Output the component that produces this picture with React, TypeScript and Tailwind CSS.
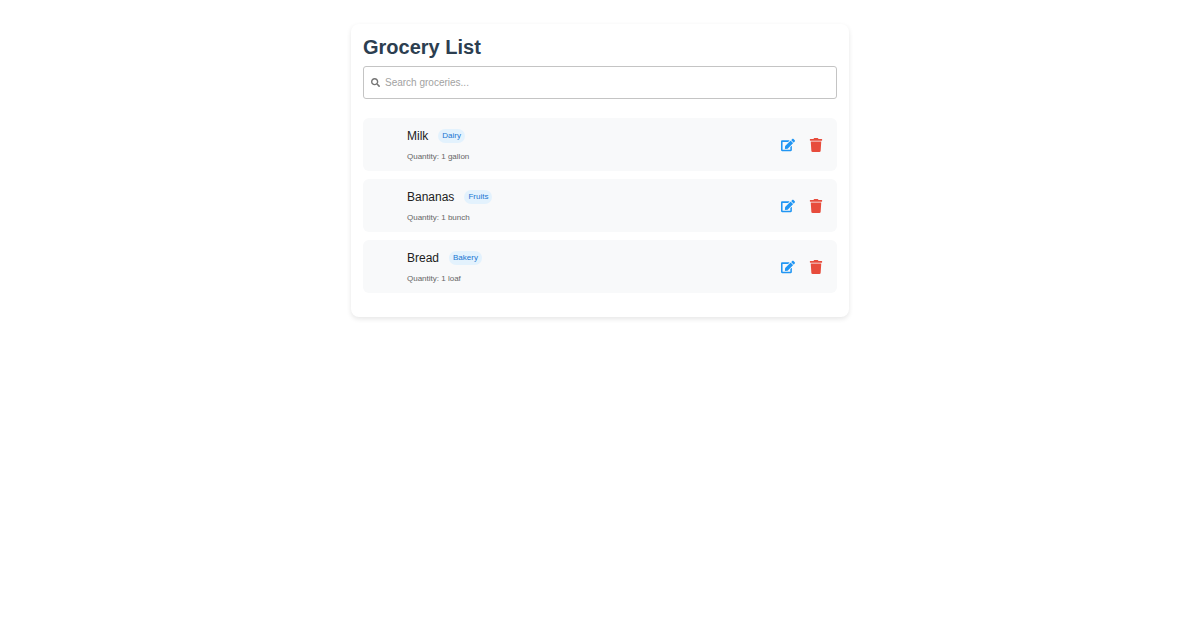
import { useState } from "react";
import type { FC } from "react";
import { FaEdit, FaSearch, FaTrash } from "react-icons/fa";

interface Grocery {
  id: number;
  name: string;
  category: string;
  quantity: string;
}

const initialGroceries: Grocery[] = [
  { id: 1, name: "Milk", category: "Dairy", quantity: "1 gallon" },
  { id: 2, name: "Bananas", category: "Fruits", quantity: "1 bunch" },
  { id: 3, name: "Bread", category: "Bakery", quantity: "1 loaf" }
];

export default function App() {
  const [groceries, setGroceries] = useState(initialGroceries);
  const [query, setQuery] = useState("");

  const visibleGroceries = groceries.filter((grocery) =>
    grocery.name.toLowerCase().includes(query.toLowerCase())
  );

  return (
    <div className="min-h-screen bg-white py-6 font-['Liberation_Sans',Arial,sans-serif]">
      <main className="mx-auto max-w-[498px] rounded-lg bg-white px-3 pt-3 pb-6 shadow-[0_2px_5px_rgba(0,0,0,0.1)]">
        <h1 className="text-[20px] leading-[22px] font-bold text-[#2c3e50]">
          Grocery List
        </h1>

        <label className="mt-2 flex h-[33px] items-center gap-[5px] rounded-[3px] border border-[#c4c4c4] px-[7px] focus-within:border-[#1976d2]">
          <FaSearch className="size-[9px] text-[#757575]" />
          <input
            type="text"
            aria-label="Search groceries"
            placeholder="Search groceries..."
            value={query}
            onChange={(event) => setQuery(event.target.value)}
            className="min-w-0 flex-1 text-[10px] text-[#212121] outline-none placeholder:text-[#a2a2a2]"
          />
        </label>

        <ul className="mt-[19px] flex flex-col gap-2">
          {visibleGroceries.map((grocery) => (
            <GroceryItem
              key={grocery.id}
              grocery={grocery}
              onDelete={() =>
                setGroceries(groceries.filter(({ id }) => id !== grocery.id))
              }
            />
          ))}
        </ul>
      </main>
    </div>
  );
}

interface GroceryItemProps {
  grocery: Grocery;
  onDelete: () => void;
}

const GroceryItem: FC<GroceryItemProps> = ({ grocery, onDelete }) => {
  return (
    <li className="flex items-center rounded-md bg-[#f8f9fa] py-2 pr-2.5 pl-11">
      <div className="min-w-0 flex-1">
        <p className="flex items-center gap-2.5 text-[12px] leading-5 text-[#212121]">
          {grocery.name}
          <span className="rounded-full bg-[#e3f2fd] px-1 text-[8px] leading-[14px] text-[#1976d2]">
            {grocery.category}
          </span>
        </p>
        <p className="mt-1 text-[8px] leading-[13px] text-[#666666]">
          Quantity: {grocery.quantity}
        </p>
      </div>

      <div className="flex gap-1.5">
        <button
          type="button"
          aria-label={`Edit ${grocery.name}`}
          className="p-1 text-[#2196f3]"
        >
          <FaEdit className="size-[14px]" />
        </button>
        <button
          type="button"
          aria-label={`Delete ${grocery.name}`}
          onClick={onDelete}
          className="p-1 text-[#e74c3c]"
        >
          <FaTrash className="size-[14px]" />
        </button>
      </div>
    </li>
  );
};
